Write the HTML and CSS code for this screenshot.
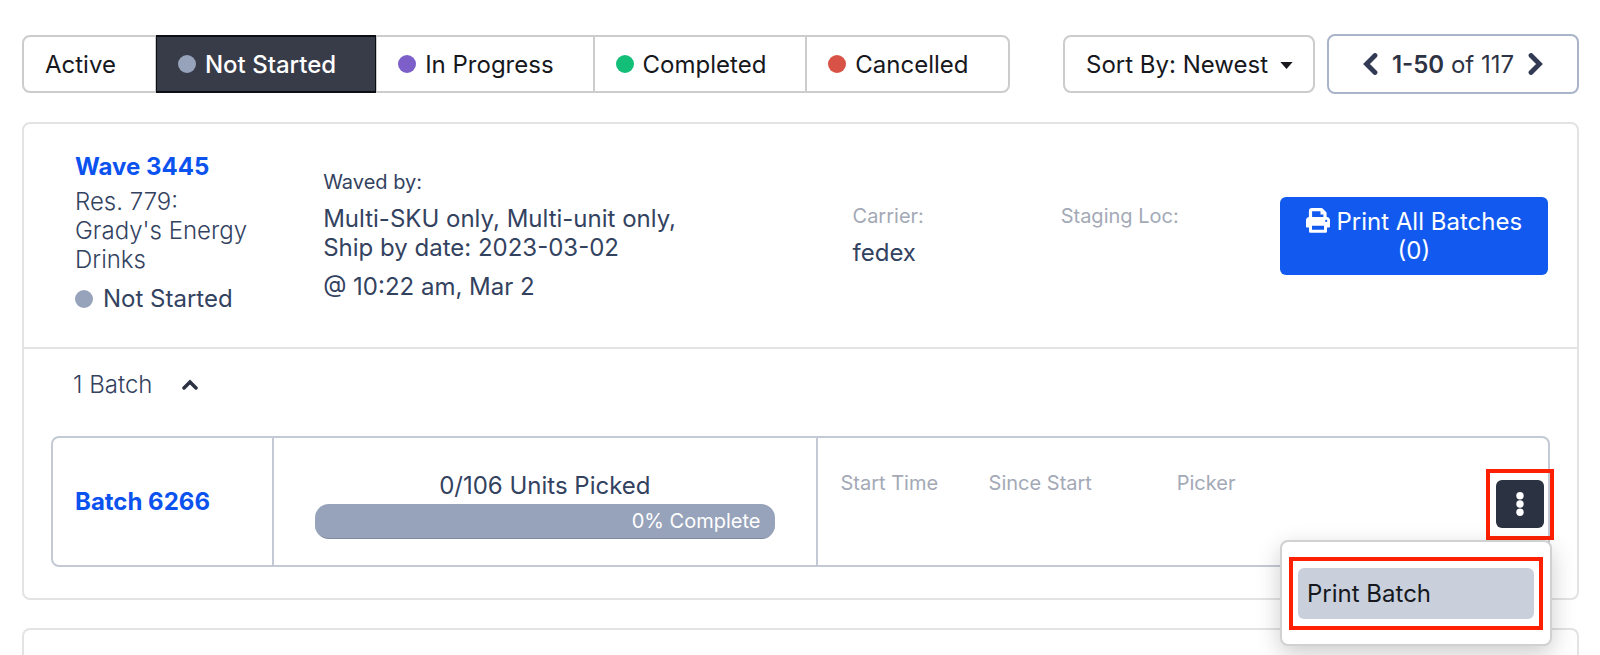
FILE: index.html
```html
<!DOCTYPE html>
<html lang="en">
<head>
<meta charset="utf-8">
<meta name="viewport" content="width=device-width, initial-scale=1">
<title>Waves</title>
<link rel="stylesheet" href="styles.css">
</head>
<body>
<main class="page">
  <div class="toolbar">
    <nav class="tabs" aria-label="Wave status">
      <button type="button" class="tab">Active</button>
      <button type="button" class="tab tab-selected" aria-pressed="true"><span class="dot dot-idle"></span>Not Started</button>
      <button type="button" class="tab"><span class="dot dot-progress"></span>In Progress</button>
      <button type="button" class="tab"><span class="dot dot-done"></span>Completed</button>
      <button type="button" class="tab"><span class="dot dot-cancelled"></span>Cancelled</button>
    </nav>
    <div class="controls">
      <div class="sort">
        <select class="sort-select" aria-label="Sort order">
          <option>Sort By: Newest</option>
        </select>
        <svg class="sort-caret" viewBox="0 0 14 8" aria-hidden="true"><path d="M0 0h14L7 8z" fill="currentColor"/></svg>
      </div>
      <div class="pager">
        <button type="button" class="pager-button" aria-label="Previous page">
          <svg viewBox="0 0 14 22" aria-hidden="true"><path d="M11.500 2.500 3 11l8.500 8.500" fill="none" stroke="currentColor" stroke-width="4.800" stroke-linecap="round"/></svg>
        </button>
        <span class="pager-text"><strong>1-50</strong> of 117</span>
        <button type="button" class="pager-button" aria-label="Next page">
          <svg viewBox="0 0 14 22" aria-hidden="true"><path d="M2.500 2.500 11 11l-8.500 8.500" fill="none" stroke="currentColor" stroke-width="4.800" stroke-linecap="round"/></svg>
        </button>
      </div>
    </div>
  </div>

  <section class="card">
    <div class="wave">
      <div class="wave-id">
        <a class="title-link" href="#wave-3445">Wave 3445</a>
        <p class="wave-customer">Res. 779:<br>Grady's Energy Drinks</p>
        <p class="wave-status"><span class="dot dot-idle"></span>Not Started</p>
      </div>
      <div class="wave-rules">
        <p class="label label-dark">Waved by:</p>
        <p class="rules">Multi-SKU only, Multi-unit only,<br>Ship by date: 2023-03-02</p>
        <p class="rules">@ 10:22 am, Mar 2</p>
      </div>
      <div class="wave-field">
        <p class="label">Carrier:</p>
        <p class="rules">fedex</p>
      </div>
      <div class="wave-field">
        <p class="label">Staging Loc:</p>
      </div>
      <button type="button" class="print-all">
        <svg class="print-icon" viewBox="0 0 24 25" aria-hidden="true">
          <path d="M4.500 10V3.200a1.500 1.500 0 0 1 1.500-1.500h9.500l3.500 3.500V10" fill="none" stroke="currentColor" stroke-width="3.200" stroke-linejoin="round"/>
          <path d="M14.500 2v4.500H19z" fill="currentColor"/>
          <path fill="currentColor" fill-rule="evenodd" d="M3.500 9h17A3.500 3.500 0 0 1 24 12.500V18.500a1 1 0 0 1-1 1h-2V23.500a1.300 1.300 0 0 1-1.300 1.300H4.300A1.300 1.300 0 0 1 3 23.500v-4H1a1 1 0 0 1-1-1V12.500A3.500 3.500 0 0 1 3.500 9zM6 17.800v4h12v-4zM20.200 11.800a1.100 1.100 0 1 0 0 2.200 1.100 1.100 0 0 0 0-2.200z"/>
        </svg>
        Print All Batches (0)
      </button>
    </div>

    <div class="batches">
      <button type="button" class="batch-toggle" aria-expanded="true">
        1 Batch
        <svg class="toggle-caret" viewBox="0 0 16 11" aria-hidden="true"><path d="M2 9l6-6 6 6" fill="none" stroke="currentColor" stroke-width="3.500" stroke-linecap="round"/></svg>
      </button>
      <div class="batch">
        <div class="batch-name"><a class="title-link" href="#batch-6266">Batch 6266</a></div>
        <div class="batch-progress">
          <p class="picked">0/106 Units Picked</p>
          <div class="bar" role="progressbar" aria-valuenow="0" aria-valuemin="0" aria-valuemax="100">0% Complete</div>
        </div>
        <div class="batch-detail">
          <p class="label">Start Time</p>
          <p class="label">Since Start</p>
          <p class="label">Picker</p>
          <div class="actions">
            <div class="callout callout-button">
              <button type="button" class="menu-button" aria-label="Batch actions" aria-haspopup="menu" aria-expanded="true">
                <svg class="menu-dots" viewBox="0 0 8 24" aria-hidden="true"><g fill="currentColor"><circle cx="4" cy="3.800" r="3.700"/><circle cx="4" cy="12" r="3.700"/><circle cx="4" cy="20.200" r="3.700"/></g></svg>
              </button>
            </div>
            <div class="menu" role="menu">
              <div class="callout callout-item">
                <button type="button" class="menu-item" role="menuitem">Print Batch</button>
              </div>
            </div>
          </div>
        </div>
      </div>
    </div>
  </section>

  <section class="card card-next"></section>
</main>
</body>
</html>
```
FILE: styles.css
```css
* {
  box-sizing: border-box;
}

body {
  margin: 0;
  background: #fff;
  color: #33425f;
  font-family: Inter, "Liberation Sans", sans-serif;
  font-size: 24px;
  line-height: 29px;
}

p {
  margin: 0;
}

button,
select {
  margin: 0;
  font: inherit;
  cursor: pointer;
}

.page {
  display: flex;
  flex-direction: column;
  gap: 28px;
  height: 100vh;
  padding: 34px 21px 0 22px;
  overflow: hidden;
}

/* Toolbar */

.toolbar {
  display: flex;
  justify-content: space-between;
  align-items: center;
}

.tabs {
  display: flex;
  align-items: stretch;
  height: 58px;
}

.tab {
  display: flex;
  align-items: center;
  gap: 9px;
  padding: 0 39px 0 21px;
  border: 2px solid #ccc;
  border-left-width: 1px;
  border-right-width: 1px;
  background: #fff;
  color: #16181d;
}

.tab:first-child {
  border-left-width: 2px;
  border-radius: 8px 0 0 8px;
}

.tab:last-child {
  border-right-width: 2px;
  border-radius: 0 8px 8px 0;
}

.tab-selected {
  border-color: #0c0e14;
  background: #383b48;
  color: #fff;
  font-weight: 500;
}

.dot {
  flex: none;
  width: 18px;
  height: 18px;
  border-radius: 50%;
}

.dot-idle {
  background: #97a3ba;
}

.dot-progress {
  background: #7c5fc8;
}

.dot-done {
  background: #13bf78;
}

.dot-cancelled {
  background: #d85245;
}

.controls {
  display: flex;
  align-items: center;
  gap: 12px;
}

.sort {
  position: relative;
}

.sort-select {
  width: 252px;
  height: 58px;
  padding: 0 21px;
  border: 2px solid #ccc;
  border-radius: 8px;
  background: #fff;
  color: #16181d;
  appearance: none;
}

.sort-caret {
  position: absolute;
  top: 27px;
  right: 22px;
  width: 13px;
  height: 7px;
  color: #16181d;
  pointer-events: none;
}

.pager {
  display: flex;
  align-items: center;
  justify-content: center;
  gap: 14px;
  width: 252px;
  height: 60px;
  border: 2px solid #a9b4c9;
  border-radius: 8px;
  color: #2d3344;
}

.pager strong {
  font-weight: 600;
}

.pager-button {
  display: flex;
  padding: 0;
  border: 0;
  background: none;
  color: #333b54;
}

.pager-button svg {
  width: 15px;
  height: 22px;
}

/* Wave card */

.card {
  border: 2px solid #e2e3e4;
  border-radius: 8px;
}

.card-next {
  flex: 1;
  border-bottom: 0;
  border-radius: 8px 8px 0 0;
}

.wave {
  display: grid;
  grid-template-columns: 248fr 529fr 208fr 219fr 268fr;
  align-items: center;
  padding: 28px 29px 28px 51px;
  border-bottom: 2px solid #e2e3e4;
}

.wave-id {
  padding: 0 48px 6px 0;
}

.title-link {
  color: #0b52ef;
  font-weight: 700;
  text-decoration: none;
}

.wave-customer {
  margin-top: 6px;
  font-weight: 300;
}

.wave-status {
  display: flex;
  align-items: center;
  gap: 10px;
  margin-top: 10px;
}

.wave-rules,
.wave-field {
  display: flex;
  flex-direction: column;
  gap: 10px;
}

.wave-field {
  min-height: 63px;
}

.label {
  color: #a3a9b6;
  font-size: 20px;
  line-height: 24px;
}

.label-dark {
  color: #33425f;
}

.print-all {
  padding: 10px 20px;
  border: 0;
  border-radius: 6px;
  background: #125aef;
  color: #fff;
  text-align: center;
}

.print-icon {
  width: 24px;
  height: 25px;
  vertical-align: -3px;
}

/* Batches */

.batches {
  padding: 21px 27px 31px;
}

.batch-toggle {
  display: flex;
  align-items: center;
  gap: 30px;
  padding: 0 22px;
  border: 0;
  background: none;
  color: #33425f;
  font-weight: 300;
}

.toggle-caret {
  width: 16px;
  height: 11px;
  color: #2b3142;
}

.batch {
  display: grid;
  grid-template-columns: 221fr 543fr 730fr;
  margin-top: 37px;
  border: 2px solid #c4cad5;
  border-radius: 8px;
}

.batch-name,
.batch-progress {
  display: flex;
  flex-direction: column;
  justify-content: center;
  border-right: 2px solid #c4cad5;
}

.batch-name {
  padding-left: 22px;
}

.batch-progress {
  gap: 4px;
  padding: 6px 41px 0;
}

.picked {
  text-align: center;
}

.bar {
  padding: 3px 14px;
  border-bottom: 1px solid #7e8ba3;
  border-radius: 14px;
  background: #97a3ba;
  color: #fff;
  font-size: 20px;
  line-height: 28px;
  text-align: right;
}

.batch-detail {
  display: grid;
  grid-template-columns: 148fr 188fr 309fr auto;
  padding: 31px 0 25px 23px;
}

.batch-detail .label {
  padding-top: 2px;
}

/* Batch actions */

.actions {
  position: relative;
}

.callout {
  border: 4px solid #fe2000;
}

.callout-button {
  margin-right: -6px;
  padding: 7px 6px 8px;
}

.menu-button {
  display: flex;
  align-items: center;
  justify-content: center;
  width: 48px;
  height: 48px;
  padding: 0;
  border: 0;
  border-radius: 6px;
  background: #2b3242;
  color: #fff;
}

.menu-dots {
  width: 8px;
  height: 24px;
}

.menu {
  position: absolute;
  top: 100%;
  right: -4px;
  width: 272px;
  padding: 15px 7px 14px;
  border: 2px solid #d0d1d3;
  border-radius: 8px;
  background: #fff;
  box-shadow: 0 8px 24px rgba(0, 0, 0, 0.2);
}

.callout-item {
  padding: 7px 5px;
}

.menu-item {
  width: 100%;
  padding: 11px 9px;
  border: 0;
  border-radius: 6px;
  background: #c9d0dc;
  color: #16181d;
  text-align: left;
}
```
